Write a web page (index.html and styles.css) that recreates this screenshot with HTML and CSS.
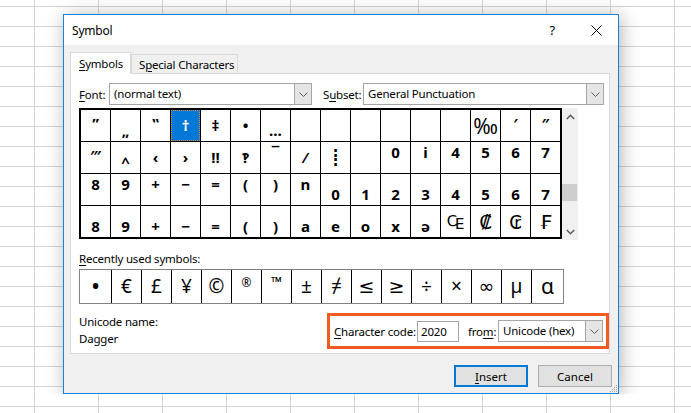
FILE: index.html
```html
<!DOCTYPE html>
<html>
<head>
<meta charset="utf-8">
<title>Symbol</title>
<link rel="stylesheet" href="styles.css">
</head>
<body>
<div class="dialog">
  <div class="titlebar">
    <span class="title">Symbol</span>
    <span class="help">?</span>
    <span class="close"><svg width="11" height="11" viewBox="0 0 11 11"><path d="M0.5 0.5L10.5 10.5M10.5 0.5L0.5 10.5" stroke="#000" stroke-width="1" fill="none"/></svg></span>
  </div>
  <div class="main">
    <div class="tabs">
      <div class="tab active"><u>S</u>ymbols</div>
      <div class="tab">S<u>p</u>ecial Characters</div>
    </div>
    <div class="panel">
      <div class="fontrow">
        <span class="lbl lbl-font"><u>F</u>ont:</span>
        <div class="combo combo-font"><span class="combo-text">(normal text)</span><span class="drop"><svg width="9" height="5" viewBox="0 0 9 5"><path d="M0.5 0.5L4.5 4.5L8.5 0.5" fill="none" stroke="#5a5a5a"/></svg></span></div>
        <span class="lbl lbl-subset">S<u>u</u>bset:</span>
        <div class="combo combo-subset"><span class="combo-text">General Punctuation</span><span class="drop"><svg width="9" height="5" viewBox="0 0 9 5"><path d="M0.5 0.5L4.5 4.5L8.5 0.5" fill="none" stroke="#5a5a5a"/></svg></span></div>
      </div>
      <div class="charmap">
        <div class="grid">
          <div class="c t q">”</div><div class="c b">„</div><div class="c t q">‟</div><div class="c sel">†</div><div class="c">‡</div><div class="c">•</div><div class="c b">…</div><div class="c"></div>
          <div class="c"></div><div class="c"></div><div class="c"></div><div class="c"></div><div class="c"></div><div class="c big">‰</div><div class="c t q">′</div><div class="c t q">″</div>

          <div class="c t q">‴</div><div class="c b">^</div><div class="c">‹</div><div class="c">›</div><div class="c">‼</div><div class="c">‽</div><div class="c t">‾</div><div class="c">⁄</div>
          <div class="c dots">⁞</div><div class="c"></div><div class="c t">0</div><div class="c t">i</div><div class="c t">4</div><div class="c t">5</div><div class="c t">6</div><div class="c t">7</div>

          <div class="c t">8</div><div class="c t">9</div><div class="c t">+</div><div class="c t">−</div><div class="c t">=</div><div class="c t">(</div><div class="c t">)</div><div class="c t">n</div>
          <div class="c b">0</div><div class="c b">1</div><div class="c b">2</div><div class="c b">3</div><div class="c b">4</div><div class="c b">5</div><div class="c b">6</div><div class="c b">7</div>

          <div class="c b">8</div><div class="c b">9</div><div class="c b">+</div><div class="c b">−</div><div class="c b">=</div><div class="c b">(</div><div class="c b">)</div><div class="c b">a</div>
          <div class="c b">e</div><div class="c b">o</div><div class="c b">x</div><div class="c b">ə</div><div class="c cur">₠</div><div class="c cur">₡</div><div class="c cur">₢</div><div class="c cur">₣</div>
        </div>
        <div class="sb">
          <div class="sb-btn"><svg width="9" height="6" viewBox="0 0 9 6"><path d="M0.8 5L4.5 1.3L8.2 5" fill="none" stroke="#606060" stroke-width="1.6"/></svg></div>
          <div class="sb-track"><div class="sb-thumb"></div></div>
          <div class="sb-btn"><svg width="9" height="6" viewBox="0 0 9 6"><path d="M0.8 1L4.5 4.7L8.2 1" fill="none" stroke="#606060" stroke-width="1.6"/></svg></div>
        </div>
      </div>
      <div class="recent-label"><u>R</u>ecently used symbols:</div>
      <div class="recent">
        <div class="r bullet">•</div><div class="r">€</div><div class="r">£</div><div class="r">¥</div><div class="r">©</div><div class="r sup">®</div><div class="r sup tm">™</div><div class="r">±</div>
        <div class="r">≠</div><div class="r">≤</div><div class="r">≥</div><div class="r">÷</div><div class="r">×</div><div class="r">∞</div><div class="r">µ</div><div class="r alpha">α</div>
      </div>
      <div class="info">
        <div class="uname">
          <div>Unicode name:</div>
          <div>Dagger</div>
        </div>
        <div class="codebox">
          <span class="lbl lbl-code"><u>C</u>haracter code:</span>
          <div class="input">2020</div>
          <span class="lbl lbl-from">fro<u>m</u>:</span>
          <div class="combo combo-from"><span class="combo-text">Unicode (hex)</span><span class="drop"><svg width="9" height="5" viewBox="0 0 9 5"><path d="M0.5 0.5L4.5 4.5L8.5 0.5" fill="none" stroke="#5a5a5a"/></svg></span></div>
        </div>
      </div>
    </div>
    <div class="buttons">
      <button class="btn primary"><u>I</u>nsert</button>
      <button class="btn">Cancel</button>
    </div>
  </div>
  <div class="grip"><svg width="9" height="9" viewBox="0 0 9 9"><g fill="#a0a0a0"><rect x="7" y="1" width="1" height="1"/><rect x="5" y="3" width="1" height="1"/><rect x="7" y="3" width="1" height="1"/><rect x="3" y="5" width="1" height="1"/><rect x="5" y="5" width="1" height="1"/><rect x="7" y="5" width="1" height="1"/><rect x="1" y="7" width="1" height="1"/><rect x="3" y="7" width="1" height="1"/><rect x="5" y="7" width="1" height="1"/><rect x="7" y="7" width="1" height="1"/></g></svg></div>
</div>
</body>
</html>
```
FILE: styles.css
```css
html {
  background-color: #ffffff;
  background-image:
    linear-gradient(to right, #d4d4d4 1px, transparent 1px),
    linear-gradient(to bottom, #d4d4d4 1px, transparent 1px);
  background-size: 64px 100%, 100% 20px;
  background-position: 34px 0, 0 6px;
  min-height: 100%;
}

body {
  margin: 0;
  font-family: "Noto Sans", "DejaVu Sans", sans-serif;
  font-size: 11.5px;
  letter-spacing: -0.2px;
  color: #000;
}

u { text-decoration: underline; text-underline-offset: 2px; }

.dialog {
  position: relative;
  width: 556px;
  height: 380px;
  box-sizing: border-box;
  margin: 14px 0 0 63px;
  border: 1px solid #1883d7;
  background: #f0f0f0;
  box-shadow: 2px 2px 18px rgba(0, 0, 0, 0.3);
  display: flex;
  flex-direction: column;
}

.titlebar {
  height: 30px;
  flex: none;
  background: #fff;
  display: flex;
  align-items: center;
  padding-left: 8px;
  font-size: 12px;
}
.title { flex: 1; }
.help { margin-right: 36px; font-size: 13px; }
.close { display: flex; margin-right: 16px; }

.main {
  flex: 1;
  padding: 7px 6px 7px 6px;
  display: flex;
  flex-direction: column;
}

.tabs {
  display: flex;
  align-items: flex-end;
  height: 21px;
}
.tab {
  box-sizing: border-box;
  height: 19px;
  line-height: 19px;
  width: 107px;
  padding-left: 7px;
  border: 1px solid #d9d9d9;
  border-bottom: 0;
  background: #f0f0f0;
  white-space: nowrap;
}
.tab.active {
  position: relative;
  z-index: 1;
  width: 61px;
  height: 22px;
  line-height: 21px;
  margin-bottom: -1px;
  padding-left: 8px;
  background: #fff;
}

.panel {
  background: #fff;
  border: 1px solid #d9d9d9;
  margin-right: 2px;
  padding: 9px 0 4px 8px;
}

.fontrow {
  display: flex;
  align-items: center;
  height: 22px;
}
.lbl { white-space: nowrap; }
.lbl-font { width: 30px; }
.lbl-subset { width: 40px; margin-left: 11px; }

.combo {
  box-sizing: border-box;
  height: 22px;
  border: 1px solid #a5a5a5;
  background: #fff;
  display: flex;
  align-items: stretch;
}
.combo-text {
  flex: 1;
  padding-left: 4px;
  line-height: 20px;
  white-space: nowrap;
  overflow: hidden;
}
.drop {
  width: 16px;
  background: #e5e5e5;
  border-left: 1px solid #a5a5a5;
  display: flex;
  align-items: center;
  justify-content: center;
}
.combo-font { width: 203px; }
.combo-subset { width: 241px; }

.charmap {
  display: flex;
  align-items: flex-start;
  margin-top: 3px;
}
.grid {
  display: grid;
  grid-template-columns: repeat(16, 29px);
  grid-auto-rows: 31px;
  gap: 1px;
  padding: 1px;
  border: 1px solid #000;
  background: #000;
}
.c {
  background: #fff;
  display: flex;
  justify-content: center;
  align-items: center;
  font-family: "Noto Sans", "DejaVu Sans", sans-serif;
  font-weight: bold;
  font-size: 15px;
  letter-spacing: 0;
  line-height: 1;
  box-sizing: border-box;
}
.c.t { align-items: flex-start; padding-top: 3px; }
.c.t.q { padding-top: 6px; }
.c.b { align-items: flex-end; padding-bottom: 3px; }
.c.big { font-size: 21px; font-weight: normal; padding-top: 2px; }
.c.cur { font-size: 20px; font-weight: normal; font-family: "DejaVu Sans", "Noto Sans", sans-serif; padding-top: 0; }
.c.dots { font-family: "DejaVu Sans", sans-serif; font-weight: normal; font-size: 24px; }
.c.sel {
  background: #0078d7;
  color: #fff;
  outline: 1px dotted #e38a2c;
  outline-offset: -1px;
}

.sb {
  width: 16px;
  height: 132px;
  background: #f0f0f0;
  display: flex;
  flex-direction: column;
}
.sb-btn {
  height: 17px;
  display: flex;
  align-items: center;
  justify-content: center;
}
.sb-track { flex: 1; }
.sb-thumb {
  margin-top: 59px;
  width: 15px;
  height: 17px;
  background: #cdcdcd;
}

.recent-label {
  margin-top: 11px;
  line-height: 16px;
  height: 16px;
}
.recent {
  margin-top: 2px;
  box-sizing: border-box;
  width: 485px;
  height: 35px;
  border: 1px solid #828282;
  display: grid;
  grid-template-columns: 31px repeat(14, 30px) 1fr;
}
.r {
  border-left: 1px solid #000;
  display: flex;
  align-items: center;
  justify-content: center;
  font-family: "Noto Sans", "DejaVu Sans", sans-serif;
  font-size: 19px;
  letter-spacing: 0;
  line-height: 1;
}
.r:first-child { border-left: 0; }
.r.bullet { font-weight: bold; }
.r.sup { font-size: 12px; align-items: flex-start; padding-top: 7px; }
.r.tm { font-weight: bold; font-size: 14px; padding-top: 5px; }
.r.alpha { font-size: 21px; }

.info {
  display: flex;
  justify-content: space-between;
  margin-top: 9px;
}
.uname { line-height: 17px; }

.codebox {
  box-sizing: border-box;
  width: 282px;
  height: 36px;
  border: 3px solid #f35a1f;
  display: flex;
  align-items: center;
  padding-left: 4px;
}
.lbl-code { width: 83px; }
.input {
  box-sizing: border-box;
  width: 42px;
  height: 21px;
  border: 1px solid #a5a5a5;
  padding-left: 3px;
  line-height: 19px;
}
.lbl-from { width: 30px; margin-left: 9px; }
.combo-from { width: 105px; }

.buttons {
  display: flex;
  justify-content: flex-end;
  gap: 10px;
  margin-top: 11px;
}
.btn {
  box-sizing: border-box;
  width: 74px;
  height: 22px;
  padding: 0;
  border: 1px solid #adadad;
  background: #e1e1e1;
  font: inherit;
  color: #000;
}
.btn.primary { border: 2px solid #0078d7; }

.grip {
  position: absolute;
  right: 0;
  bottom: 0;
  display: flex;
}
```
